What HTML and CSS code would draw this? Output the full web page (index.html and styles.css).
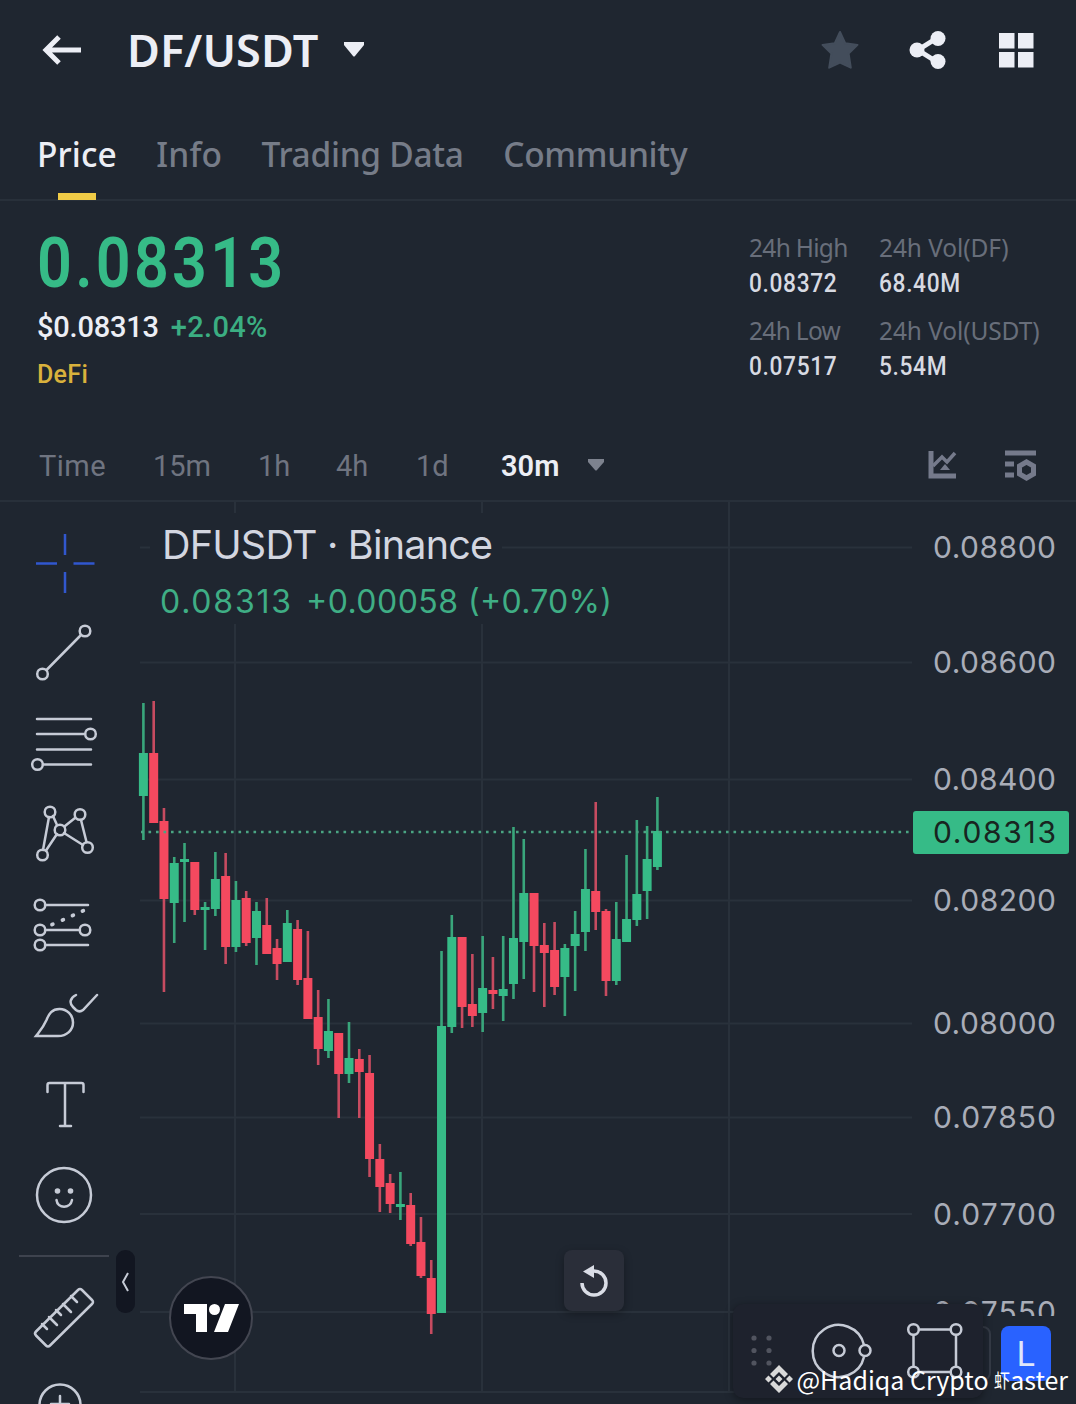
FILE: index.html
```html
<!DOCTYPE html>
<html lang="en">
<head>
    <meta charset="UTF-8">
    <meta name="viewport" content="width=device-width, initial-scale=1.0">
    <title>DF/USDT</title>
    <link rel="stylesheet" href="styles.css">
</head>
<body>
    <header class="header">
        <svg class="back" width="40" height="32" viewBox="0 0 40 32"><path d="M39 16H5M17 3L4 16l13 13" fill="none" stroke="#eceef5" stroke-width="5"/></svg>
        <h1>DF/USDT</h1>
        <svg class="caret" width="22" height="18" viewBox="0 0 22 18"><path d="M1 1h20v3l-9 11q-1 1-2 0L1 4z" fill="#eceef5"/></svg>
        <div class="actions">
            <svg width="40" height="40" viewBox="0 0 40 40"><path d="M20 2l5.3 11.3 12.2 1.6-8.9 8.6 2.2 14.2L20 32.5 9.200 37.700l2.200-14.200L2.500 14.900l12.200-1.600z" fill="#434d5b" stroke="#434d5b" stroke-width="2" stroke-linejoin="round"/></svg>
            <svg width="40" height="40" viewBox="0 0 40 40"><path d="M29 8L10 20l19 12" fill="none" stroke="#eceef5" stroke-width="5"/><g fill="#eceef5"><circle cx="9" cy="20" r="7.500"/><circle cx="30" cy="8.500" r="7.500"/><circle cx="30" cy="31.500" r="7.500"/></g></svg>
            <svg width="36" height="36" viewBox="0 0 36 36" fill="#eceef5"><path d="M1 1h15.500v15.500H1zM20 1h15.500v15.500H20zM1 20h15.500v15.500H1zM20 20h15.500v15.500H20z"/></svg>
        </div>
    </header>

    <nav class="tabs">
        <a class="tab active">Price</a>
        <a class="tab info">Info</a>
        <a class="tab long">Trading Data</a>
        <a class="tab long">Community</a>
    </nav>

    <section class="summary">
        <div class="quote">
            <div class="price">0.08313</div>
            <div class="fiat">$0.08313 <span class="up">+2.04%</span></div>
            <div class="tag">DeFi</div>
        </div>
        <div class="stats">
            <div class="stat"><label>24h High</label><b>0.08372</b></div>
            <div class="stat vol"><label>24h Vol(DF)</label><b>68.40M</b></div>
            <div class="stat"><label>24h Low</label><b>0.07517</b></div>
            <div class="stat vol"><label>24h Vol(USDT)</label><b>5.54M</b></div>
        </div>
    </section>

    <div class="intervals">
        <span class="i-time">Time</span>
        <span class="i-15m">15m</span>
        <span class="i-1h">1h</span>
        <span class="i-4h">4h</span>
        <span class="i-1d">1d</span>
        <span class="i-30m selected">30m</span>
        <svg width="18" height="14" viewBox="0 0 18 14"><path d="M1 1h16v3l-7 8q-1 1-2 0L1 4z" fill="#7d828e"/></svg>
        <div class="interval-icons">
            <svg width="30" height="30" viewBox="0 0 30 30"><path d="M3 1v25h25" fill="none" stroke="#757a8b" stroke-width="5"/><path d="M5 16l9-9 5 5 8-9" fill="none" stroke="#757a8b" stroke-width="3.500"/><path d="M17 14l5 6H12z" fill="#757a8b"/></svg>
            <svg width="34" height="32" viewBox="0 0 34 32"><path d="M1 4h31M1 15h9M1 26h9" fill="none" stroke="#757a8b" stroke-width="5"/><path d="M22.500 13l7 4v8l-7 4-7-4v-8z" fill="none" stroke="#757a8b" stroke-width="5"/></svg>
        </div>
    </div>

    <main class="chart">
        <div class="tools">
            <svg viewBox="0 0 130 90" class="cursor"><path d="M65 16v21M65 54v21M36 45.500h21M73.500 45.500h21"/></svg>
            <svg viewBox="0 0 130 90"><path d="M46.500 62L81 27"/><circle cx="42.500" cy="66" r="5.300"/><circle cx="85" cy="23" r="5.300"/></svg>
            <svg viewBox="0 0 130 90"><path d="M37 21h54M37 36h48M37 51.500h54M43 66.500h48"/><circle cx="90.500" cy="36" r="5.300"/><circle cx="37.500" cy="66.500" r="5.300"/></svg>
            <svg viewBox="0 0 130 90"><path d="M49 29l-6 33M53 28l4 9M65 38l10-8M64 45l19 12M57 46L46 62.500M81 32l5.500 22"/><circle cx="50" cy="24" r="5.300"/><circle cx="80" cy="26.500" r="5.300"/><circle cx="60" cy="42" r="5.300"/><circle cx="42.500" cy="67" r="5.300"/><circle cx="87.500" cy="59.500" r="5.300"/></svg>
            <svg viewBox="0 0 130 90"><path d="M45 27h43M45 52h35M45 67h43"/><circle cx="40" cy="27" r="5.300"/><circle cx="40" cy="52" r="5.300"/><circle cx="85" cy="52" r="5.300"/><circle cx="40" cy="67" r="5.300"/><path d="M52 46.500l.8-.3M62.500 42l.8-.3M72.500 37.500l.8-.3M82.500 33l.8-.3" stroke-width="3.800"/></svg>
            <svg viewBox="0 0 130 90"><path d="M36 68h22c9 0 15-6 15-13.500S67 41 59.500 41C52 41 49 45.500 46.500 52 43 60 39 64 36 68zM76 27c-6 3-7 8-3 12l3 3c2.500 2 4.500 2 7 0l14-15"/></svg>
            <svg viewBox="0 0 130 90"><path d="M47.500 34v-7q0-2 2-2h32q2 0 2 2v7M65 25v43M60 68h11"/></svg>
            <svg viewBox="0 0 130 90"><circle cx="64" cy="47" r="27"/><path d="M56.500 52c1 9 14 9 15.500 0"/><g fill="#c6cbd6" stroke="none"><circle cx="57.500" cy="43" r="2.800"/><circle cx="70.500" cy="43" r="2.800"/></g></svg>
            <hr>
            <svg viewBox="0 0 130 90"><path d="M78 16q2-2 4 0l10 10q2 2 0 4L50 71.500q-2 2-4 0L36 61.500q-2-2 0-4zM42 50l5 5M49 43l8 8M56 36l5 5M63 30l8 8M71 22l6 6"/></svg>
            <svg viewBox="0 0 130 90"><circle cx="60" cy="41" r="20.500"/><path d="M60 32v18M51 40h18"/></svg>
        </div>
        <svg id="plot" class="plot" viewBox="130 502 946 902"></svg>

        <div class="collapse"><svg width="9" height="20" viewBox="0 0 9 20"><path d="M7 1L2 10l5 9" fill="none" stroke="#c6cbd6" stroke-width="2"/></svg></div>
        <div class="tv-logo"><svg width="56" height="30" viewBox="0 0 56 30" fill="#fff"><path d="M1 1h23v28H13V11H1zM42 1h14L45 29H31z"/><circle cx="31.500" cy="6.500" r="5.500"/></svg></div>
        <div class="reset"><svg width="32" height="34" viewBox="0 0 32 34"><path d="M4 19a12 12 0 1 0 12-12h-3" fill="none" stroke="#dadde6" stroke-width="3.500"/><path d="M5 7.500L16 1v13z" fill="#dadde6"/></svg></div>
        <div class="hidden-button"></div>
        <div class="log-button">L</div>
        <div class="shapes">
            <svg width="250" height="94" viewBox="733 1304 250 94">
                <g fill="#51545f"><circle cx="754" cy="1338" r="2.600"/><circle cx="769" cy="1338" r="2.600"/><circle cx="754" cy="1350.500" r="2.600"/><circle cx="769" cy="1350.500" r="2.600"/><circle cx="754" cy="1363" r="2.600"/><circle cx="769" cy="1363" r="2.600"/></g>
                <g fill="none" stroke="#c6cbd6" stroke-width="2.500"><path d="M864 1345a26 26 0 1 0 0 12"/><circle cx="839" cy="1350.500" r="5.500"/><circle cx="865" cy="1350.500" r="5.500"/><path d="M919 1329.500h31M919 1372h31M913.500 1335v31.500M956 1335v31.500"/><circle cx="913.500" cy="1329.500" r="5.300"/><circle cx="956" cy="1329.500" r="5.300"/><circle cx="913.500" cy="1372" r="5.300"/><circle cx="956" cy="1372" r="5.300"/></g>
            </svg>
        </div>
        <div class="credit">
            <svg width="28" height="28" viewBox="0 0 28 28" fill="#d9d9d9"><path d="M14 0l9 9-3.500 3.500L14 7l-5.500 5.500L5 9zM14 28l9-9-3.500-3.500L14 21l-5.500-5.500L5 19zM3.500 10.500L7 14l-3.500 3.500L0 14zM24.500 10.500L28 14l-3.500 3.500L21 14zM14 10.500l3.500 3.500-3.500 3.500-3.500-3.500z"/></svg>
            <span>@Hadiqa Crypto <i class="squeeze">虾</i>aster</span>
        </div>
    </main>

    <script>
        // high, low, body top, body bottom, 1 = up
        const candles = [
            [703, 840, 753, 796, 1], [701, 823, 753, 823, 0], [808, 992, 821, 899, 0], [857, 943, 863, 903, 1],
            [843, 922, 859, 862, 1], [862, 915, 862, 910, 0], [902, 950, 907, 910, 1], [852, 916, 879, 909, 1],
            [853, 964, 876, 947, 0], [881, 952, 900, 947, 1], [891, 946, 898, 943, 0], [902, 965, 911, 938, 1],
            [898, 954, 925, 954, 0], [939, 980, 948, 964, 0], [910, 962, 923, 962, 1], [920, 985, 929, 980, 0],
            [931, 1019, 978, 1019, 0], [990, 1065, 1017, 1049, 0], [999, 1058, 1031, 1051, 1], [1033, 1118, 1033, 1074, 0],
            [1022, 1083, 1058, 1074, 1], [1049, 1118, 1059, 1072, 0], [1055, 1177, 1073, 1159, 0], [1144, 1212, 1159, 1187, 0],
            [1174, 1213, 1183, 1204, 0], [1172, 1220, 1204, 1207, 1], [1193, 1246, 1205, 1244, 0], [1217, 1278, 1242, 1276, 0],
            [1260, 1334, 1278, 1314, 0], [951, 1313, 1026, 1313, 1], [915, 1033, 937, 1027, 1], [937, 1028, 937, 1007, 0],
            [954, 1027, 1004, 1016, 0], [936, 1032, 988, 1013, 1], [957, 1009, 990, 994, 0], [936, 1021, 989, 996, 1],
            [827, 999, 938, 984, 1], [839, 979, 893, 942, 1], [893, 992, 893, 946, 0], [923, 1007, 945, 953, 0],
            [922, 995, 950, 987, 0], [944, 1016, 948, 977, 1], [911, 991, 934, 946, 1], [849, 951, 889, 932, 1],
            [802, 930, 891, 912, 0], [909, 996, 911, 981, 0], [902, 985, 939, 981, 1], [855, 942, 919, 942, 1],
            [820, 926, 894, 920, 1], [826, 919, 859, 891, 1], [797, 870, 831, 867, 1]
        ];
        const levels = [
            [547.5, "0.08800"], [662.5, "0.08600"], [779.5, "0.08400"], [900.5, "0.08200"],
            [1023.5, "0.08000"], [1117.5, "0.07850"], [1214, "0.07700"], [1312, "0.07550"], [1392, ""]
        ];

        let out = "";
        [235, 482, 729].forEach(x => {
            out += `<line class="grid" x1="${x}" x2="${x}" y1="502" y2="1392"/>`;
        });
        levels.forEach(([y, label]) => {
            out += `<line class="grid" x1="140" x2="912" y1="${y}" y2="${y}"/>`;
            out += `<text class="axis" x="933" y="${y + 10.5}" textLength="123">${label}</text>`;
        });

        // legend sits on its own background so the grid stays out of the text
        out += `<rect class="mask" x="150" y="513" width="352" height="60"/>
            <rect class="mask" x="150" y="570" width="472" height="54"/>
            <text class="symbol" x="162" y="559" textLength="331">DFUSDT · Binance</text>
            <text class="change" x="160" y="613" textLength="131">0.08313</text>
            <text class="change" x="306" y="613" textLength="152">+0.00058</text>
            <text class="change" x="468" y="613" textLength="144">(+0.70%)</text>`;

        candles.forEach(([high, low, top, bottom, up], i) => {
            const x = 143.4 + i * 10.28;
            out += `<g class="${up ? "up-candle" : "down-candle"}">
                <line x1="${x}" x2="${x}" y1="${high}" y2="${low}"/>
                <rect x="${x - 4.5}" y="${top}" width="9" height="${bottom - top}"/></g>`;
        });

        out += `<line class="last" x1="141" x2="912" y1="832" y2="832"/>
            <rect class="last-box" x="913" y="811" width="156" height="43" rx="3"/>
            <text class="axis last-text" x="933" y="843" textLength="123">0.08313</text>
            <rect class="mask" x="914" y="1316" width="162" height="20"/>`;
        document.getElementById("plot").innerHTML = out;
    </script>
</body>
</html>
```
FILE: styles.css
```css
* { box-sizing: border-box; }
body { margin: 0; height: 1404px; overflow: hidden; background: #1f2630; color: #eceef5; font-family: "Noto Sans", sans-serif; }
svg { display: block; flex: none; }

.header { display: flex; align-items: center; height: 100px; padding: 0 42px 0 42px; }
h1 { margin: 0 0 0 45px; font-size: 45px; font-weight: 600; line-height: 60px; letter-spacing: 0.1px; }
.caret { margin-left: 25px; }
.actions { display: flex; align-items: center; margin-left: auto; gap: 50px; }
.actions svg:first-child { margin-right: -2px; }

.tabs { display: flex; gap: 39.5px; height: 101px; padding: 31px 37px 0; border-bottom: 2px solid #28303a; }
.tab { position: relative; height: 70px; font-size: 33.5px; font-weight: 500; line-height: 46px; letter-spacing: 0.1px; color: #767c88; }
.tab.long { letter-spacing: -0.3px; }
.tab.active { color: #eceef5; }
.tab.active::after { content: ''; position: absolute; left: 21px; bottom: 1px; width: 38px; height: 7px; background: #f0cb46; }

.summary { display: flex; justify-content: space-between; height: 229px; padding: 28px 36px 0 37px; }
.quote { font-family: Roboto, sans-serif; }
.price { width: 250px; font-size: 71px; font-weight: 600; line-height: 68px; color: #36bb87; letter-spacing: 3.8px; transform: scaleX(0.86); transform-origin: left; }
.fiat { margin-top: 13px; font-size: 29px; font-weight: 500; line-height: 34px; letter-spacing: -0.2px; }
.up { margin-left: 5px; color: #3bae82; letter-spacing: 0.3px; }
.tag { margin-top: 16px; font-size: 25px; font-weight: 500; line-height: 30px; letter-spacing: 0.3px; color: #d9b13c; }
.stats { display: grid; grid-template-columns: 130px 161px; grid-auto-rows: 83px; padding-top: 2px; }
.stat { display: flex; flex-direction: column; }
.stat label { font-size: 24.5px; line-height: 34px; color: #686e7a; letter-spacing: -0.7px; white-space: nowrap; }
.stat.vol label { letter-spacing: -0.1px; }
.stat b { font-family: Roboto, sans-serif; font-size: 25px; font-weight: 500; line-height: 38px; letter-spacing: 0.7px; color: #d7dae2; transform: scaleX(0.91); transform-origin: left; }

.intervals { display: flex; align-items: center; height: 72px; padding: 0 38px 0 39px; border-bottom: 2px solid #28303a; font-family: Roboto, sans-serif; font-size: 29px; color: #6f7480; }
.intervals span { padding-top: 2px; }
.i-time { width: 114px; letter-spacing: 0.5px; }
.i-15m { width: 105px; }
.i-1h { width: 78px; }
.i-4h { width: 80px; }
.i-1d { width: 85px; }
.i-30m { width: 86px; }
.selected { color: #eceef5; font-weight: 600; }
.interval-icons { display: flex; align-items: center; gap: 46px; margin-left: auto; }

.chart { position: relative; display: flex; height: 902px; overflow: hidden; }
.tools { display: flex; flex-direction: column; width: 130px; padding-top: 16px; }
.tools svg { width: 130px; height: 90px; fill: none; stroke: #c6cbd6; stroke-width: 2.5; stroke-linecap: round; }
.tools .cursor { stroke: #3157ce; stroke-linecap: butt; }
.tools hr { flex: none; width: 90px; height: 2px; margin: 17px 0 17px 19px; border: 0; background: #3e434e; }
.plot { width: 946px; height: 902px; }
.grid { stroke: #29313b; stroke-width: 2; }
.mask { fill: #1f2630; }
.axis { font: 30px Inter, sans-serif; fill: #a9adb8; }
.symbol { font: 39.5px Inter, sans-serif; fill: #d3d6e0; }
.change { font: 32px Inter, sans-serif; fill: #3fae85; }
.up-candle { fill: #36bb87; }
.down-candle { fill: #f4495f; }
.up-candle line { stroke: #39a67b; stroke-width: 2.6; }
.down-candle line { stroke: #c64b60; stroke-width: 2.6; }
.last { stroke: #4aa583; stroke-width: 2.6; stroke-dasharray: 2.6 4.9; }
.last-box { fill: #36bb87; }
.last-text { fill: #18241f; }

/* controls floating over the plot */
.collapse { position: absolute; left: 116px; top: 748px; display: flex; align-items: center; justify-content: center; width: 19px; height: 63px; border-radius: 9px; background: #121621; }
.tv-logo { position: absolute; left: 169px; top: 774px; display: flex; align-items: center; justify-content: center; width: 84px; height: 84px; border: 2px solid #434651; border-radius: 50%; background: #121621; }
.reset { position: absolute; left: 564px; top: 748px; display: flex; align-items: center; justify-content: center; width: 60px; height: 61px; border-radius: 8px; background: #2a2e39; box-shadow: 0 3px 8px rgba(0, 0, 0, 0.3); }
.hidden-button { position: absolute; left: 940px; top: 824px; width: 51px; height: 55px; border: 2px solid #343a45; border-radius: 8px; }
.log-button { position: absolute; left: 1001px; top: 824px; width: 50px; height: 55px; border-radius: 8px; background: #2962ff; font: 34px/55px Inter, sans-serif; text-align: center; color: #dfe6fa; }
.shapes { position: absolute; left: 733px; top: 802px; border-radius: 10px; background: #1e222d; box-shadow: 0 2px 8px rgba(0, 0, 0, 0.4); }
.credit { position: absolute; right: 8px; top: 860px; display: flex; align-items: center; gap: 3px; font: 400 25px/34px "Noto Sans CJK SC", sans-serif; color: #fff; white-space: nowrap; }
.squeeze { display: inline-block; width: 16px; font-style: normal; transform: scale(0.64, 0.78); transform-origin: left; }
```
